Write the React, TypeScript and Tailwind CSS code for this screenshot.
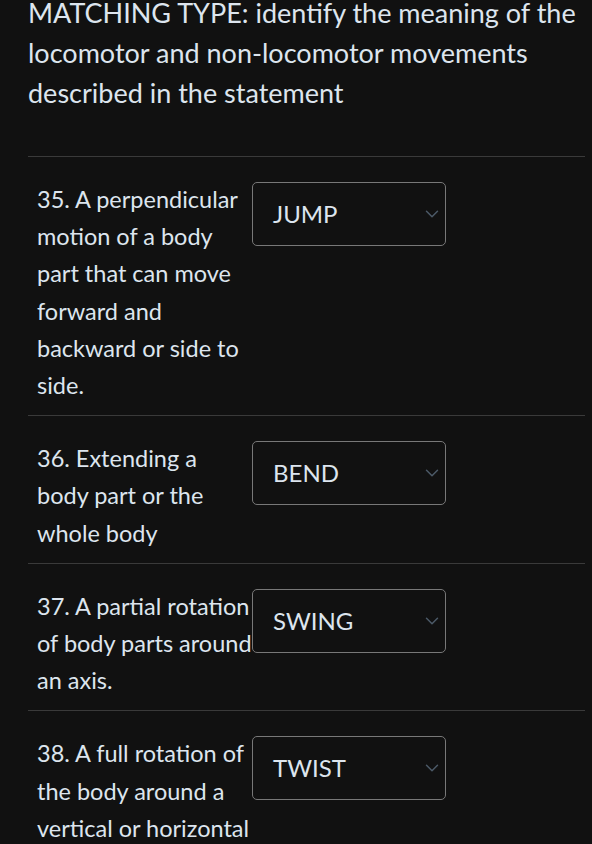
import { ChevronDown } from 'lucide-react';

const items = [
  {
    n: 35,
    text: 'A perpendicular motion of a body part that can move forward and backward or side to side.',
    answer: 'JUMP',
  },
  { n: 36, text: 'Extending a body part or the whole body', answer: 'BEND' },
  { n: 37, text: 'A partial rotation of body parts around an axis.', answer: 'SWING' },
  {
    n: 38,
    text: 'A full rotation of the body around a vertical or horizontal axis.',
    answer: 'TWIST',
  },
];

function Select({ value }: { value: string }) {
  return (
    <div className="mt-[1px] w-[194px] h-[64px] shrink-0 border border-[#787878] rounded-[5px] flex items-center justify-between pl-[20px] pr-[2px]">
      <span className="text-[24px] text-[#dde5ee]">{value}</span>
      <ChevronDown className="w-[22px] h-[22px] text-[#4c5a68]" strokeWidth={1.6} />
    </div>
  );
}

export default function App() {
  return (
    <div
      className="min-h-screen bg-[#111111] text-[#dde5ee] overflow-hidden"
      style={{ fontFamily: 'Lato, "Open Sans", sans-serif' }}
    >
      <div className="pl-[28px] pr-[7px]">
        <h1 className="text-[27px] leading-[40px] -mt-[7px] mb-[43px] font-normal whitespace-nowrap">
          MATCHING TYPE: identify the meaning of the
          <br />
          locomotor and non-locomotor movements
          <br />
          described in the statement
        </h1>

        {items.map((it) => (
          <div
            key={it.n}
            className="border-t border-[#3a3a3a] flex items-start pt-[24px] pb-[11px] pl-[9px]"
          >
            <p className="w-[215px] shrink-0 text-[23.5px] leading-[37.2px]">
              {it.n}. {it.text}
            </p>
            <Select value={it.answer} />
          </div>
        ))}
      </div>
    </div>
  );
}
